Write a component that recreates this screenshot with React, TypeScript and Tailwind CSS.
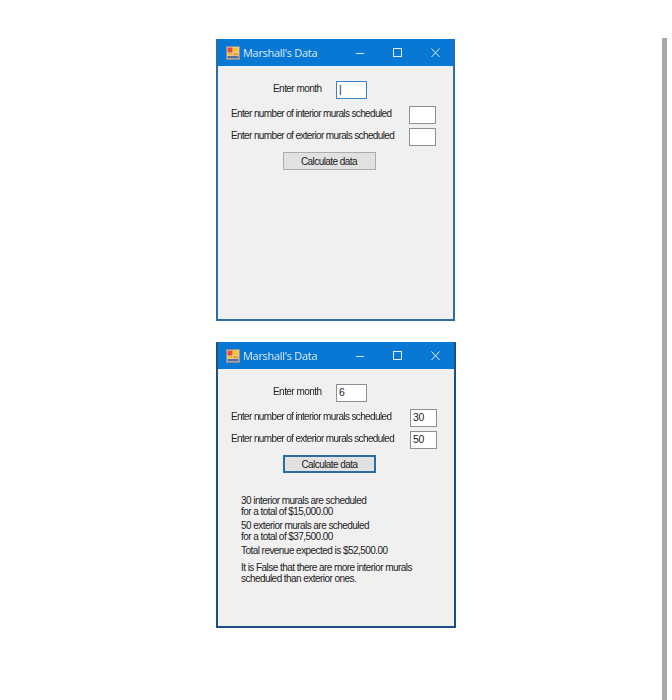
import React from "react";

function AppIcon() {
  return (
    <svg width="14" height="14" viewBox="0 0 14 14" className="shrink-0">
      <rect x="0.5" y="0.5" width="13" height="13" fill="#d9d9d9" stroke="#8a8f99" />
      <rect x="1.5" y="1.5" width="5" height="5" fill="#e8502f" />
      <rect x="7" y="1.5" width="5.5" height="5" fill="#f5c330" />
      <rect x="1.5" y="7" width="5" height="2.5" fill="#f5b52e" />
      <rect x="7" y="7" width="5.5" height="2.5" fill="#e8a23a" />
      <rect x="1.5" y="10" width="11" height="2.5" fill="#5f6f8f" />
    </svg>
  );
}

function TitleBar() {
  return (
    <div className="flex h-[27px] shrink-0 items-center bg-[#0878d4] pl-[8px] text-white">
      <AppIcon />
      <span className="ml-[3px] w-[113px] whitespace-nowrap font-['Open_Sans',sans-serif] text-[11px] leading-none tracking-[-0.3px] text-[#dcebf9]">
        Marshall&apos;s Data
      </span>
      <svg width="8" height="10" viewBox="0 0 8 10" fill="none" stroke="#cfe4f7">
        <path d="M0 5.5h8" />
      </svg>
      <svg width="9" height="10" viewBox="0 0 9 10" className="ml-[29px]" fill="none" stroke="#e3f0fb">
        <rect x="0.5" y="0.5" width="8" height="8" />
      </svg>
      <svg width="9" height="10" viewBox="0 0 9 10" className="ml-[29px]" fill="none" stroke="#e3f0fb">
        <path d="M0.5 0.5l8 8.5M8.5 0.5l-8 8.5" />
      </svg>
    </div>
  );
}

function Box({ value, className }: { value?: string; className: string }) {
  return (
    <div className={`flex h-[18px] shrink-0 items-center border bg-white pl-[2px] text-[10.5px] tracking-[-0.3px] text-[#222] ${className}`}>
      {value}
    </div>
  );
}

function Row({ label, value }: { label: string; value?: string }) {
  return (
    <div className="flex h-[18px] items-center justify-between pr-[17px] pl-[13px]">
      <span className="-translate-y-[2px] whitespace-nowrap tracking-[-0.63px]">{label}</span>
      <Box value={value} className="w-[27px] border-[#8f8f8f]" />
    </div>
  );
}

function FormWindow({
  month,
  interior,
  exterior,
  calculated,
  className,
}: {
  month?: string;
  interior?: string;
  exterior?: string;
  calculated?: boolean;
  className: string;
}) {
  return (
    <div
      className={`flex flex-col ${
        calculated
          ? "h-[286px] w-[240px] border-x-2 border-b-2 border-[#1b4f80]"
          : "h-[282px] w-[239px] border-x-2 border-b-2 border-[#2a6ea8]"
      } ${className}`}
    >
      <TitleBar />
      <div className="flex flex-1 flex-col bg-[#f0f0f0] font-['Liberation_Sans',sans-serif] text-[10px] tracking-[-0.55px] text-[#222]">
        <div className="mt-[15px] flex h-[18px] items-center pl-[55px]">
          <span className="w-[63px] -translate-y-[2px] whitespace-nowrap">Enter month</span>
          <Box
            value={calculated ? month : "|"}
            className={`w-[31px] ${calculated ? "border-[#8f8f8f]" : "border-[#3d84c6]"}`}
          />
        </div>
        <div className="mt-[7px] flex flex-col gap-[4px]">
          <Row label="Enter number of interior murals scheduled" value={interior} />
          <Row label="Enter number of exterior murals scheduled" value={exterior} />
        </div>
        <div className={`flex justify-center pr-[13px] ${calculated ? "mt-[6px]" : "mt-[6px]"}`}>
          <div
            className={`flex h-[18px] w-[93px] items-center justify-center bg-[#e1e1e1] ${
              calculated ? "border-2 border-[#2a6ca6]" : "border border-[#adadad]"
            }`}
          >
            Calculate data
          </div>
        </div>
        {calculated && (
          <div className="mt-[22px] flex flex-col pl-[23px] leading-[11px]">
            <p>
              30 interior murals are scheduled
              <br />
              for a total of $15,000.00
            </p>
            <p className="mt-[3px]">
              50 exterior murals are scheduled
              <br />
              for a total of $37,500.00
            </p>
            <p className="mt-[3px]">Total revenue expected is $52,500.00</p>
            <p className="mt-[6px]">
              It is False that there are more interior murals
              <br />
              scheduled than exterior ones.
            </p>
          </div>
        )}
      </div>
    </div>
  );
}

export default function App() {
  return (
    <div className="flex h-[700px] w-[672px] overflow-hidden bg-white">
      <div className="ml-[216px] flex flex-col pt-[39px] blur-[0.35px]">
        <FormWindow className="" />
        <FormWindow className="mt-[21px]" month="6" interior="30" exterior="50" calculated />
      </div>
      <div className="mt-[38px] ml-[206px] h-[662px] w-[5px] bg-[#a9a9a9]" />
    </div>
  );
}
